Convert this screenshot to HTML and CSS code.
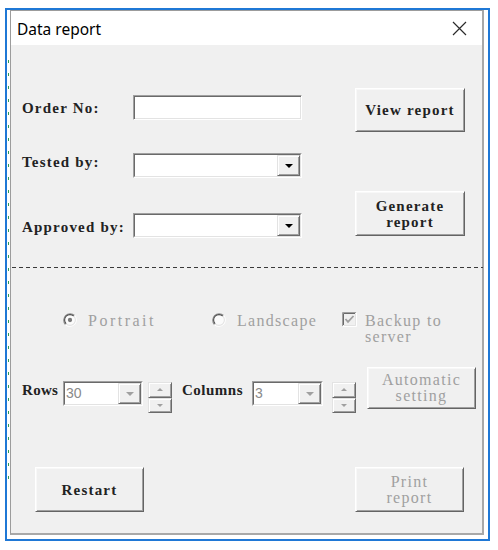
FILE: index.html
```html
<!DOCTYPE html>
<html>
<head>
<meta charset="utf-8">
<title>Data report</title>
<link rel="stylesheet" href="styles.css">
</head>
<body>
<div class="frame">
  <div class="win">
    <div class="titlebar">
      <span class="title">Data report</span>
      <svg class="close" width="15" height="15" viewBox="0 0 15 15"><path d="M1 1 L14 14 M14 1 L1 14" stroke="#2b2b2b" stroke-width="1.2" fill="none"/></svg>
    </div>
    <div class="panel">
      <div class="top">
        <div class="fields">
          <div class="row r1">
            <span class="lbl">Order No:</span>
            <div class="edit"></div>
          </div>
          <div class="row r2">
            <span class="lbl lbl-up">Tested by:</span>
            <div class="combo wide"><div class="combo-in"><div class="field"></div><div class="drop"><i class="tri"></i></div></div></div>
          </div>
          <div class="row r3">
            <span class="lbl lbl-down">Approved by:</span>
            <div class="combo wide"><div class="combo-in"><div class="field"></div><div class="drop"><i class="tri"></i></div></div></div>
          </div>
        </div>
        <div class="btncol">
          <button class="btn b-view">View report</button>
          <button class="btn b-gen">Generate<br>report</button>
        </div>
      </div>
      <div class="dash"></div>
      <div class="options">
        <div class="opt">
          <svg class="radio" width="14" height="14" viewBox="0 0 13 13">
            <circle cx="6.5" cy="6.5" r="5.5" fill="#fbfbfb"/>
            <path d="M2.26 10.74 A6 6 0 0 1 10.74 2.26" stroke="#8c8c8c" fill="none"/>
            <path d="M10.74 2.26 A6 6 0 0 1 2.26 10.74" stroke="#ffffff" fill="none"/>
            <path d="M2.96 10.04 A5 5 0 0 1 10.04 2.96" stroke="#4a4a4a" fill="none"/>
            <path d="M10.04 2.96 A5 5 0 0 1 2.96 10.04" stroke="#e3e3e3" fill="none"/>
            <circle cx="6.5" cy="6.5" r="2" fill="#7a7a7a"/>
          </svg>
          <span class="otext dis wide-sp">Portrait</span>
        </div>
        <div class="opt">
          <svg class="radio" width="14" height="14" viewBox="0 0 13 13">
            <circle cx="6.5" cy="6.5" r="5.5" fill="#fbfbfb"/>
            <path d="M2.26 10.74 A6 6 0 0 1 10.74 2.26" stroke="#8c8c8c" fill="none"/>
            <path d="M10.74 2.26 A6 6 0 0 1 2.26 10.74" stroke="#ffffff" fill="none"/>
            <path d="M2.96 10.04 A5 5 0 0 1 10.04 2.96" stroke="#4a4a4a" fill="none"/>
            <path d="M10.04 2.96 A5 5 0 0 1 2.96 10.04" stroke="#e3e3e3" fill="none"/>
          </svg>
          <span class="otext dis">Landscape</span>
        </div>
        <div class="opt">
          <svg class="check" width="15" height="15" viewBox="0 0 15 15">
            <rect x="0" y="0" width="15" height="15" fill="#f0f0f0"/>
            <path d="M0.5 14 V0.5 H14" stroke="#a0a0a0" fill="none"/>
            <path d="M1.5 13 V1.5 H13" stroke="#6a6a6a" fill="none"/>
            <path d="M1 14.5 H14.5 V1" stroke="#ffffff" fill="none"/>
            <path d="M2 13.5 H13.5 V2" stroke="#e3e3e3" fill="none"/>
            <path d="M3.5 7 L6 9.8 L11.5 4" stroke="#a0a0a0" stroke-width="1.8" fill="none"/>
          </svg>
          <span class="ctext dis">Backup to<br>server</span>
        </div>
      </div>
      <div class="setrow">
        <span class="lbl slbl l-rows">Rows</span>
        <div class="combo small c-rows"><div class="combo-in"><div class="field dtext">30</div><div class="drop"><i class="tri gray"></i></div></div></div>
        <div class="spin s-rows">
          <div class="spin-btn"><i class="utri"></i></div>
          <div class="spin-btn"><i class="dtri"></i></div>
        </div>
        <span class="lbl slbl l-cols">Columns</span>
        <div class="combo small c-cols"><div class="combo-in"><div class="field dtext">3</div><div class="drop"><i class="tri gray"></i></div></div></div>
        <div class="spin s-cols">
          <div class="spin-btn"><i class="utri"></i></div>
          <div class="spin-btn"><i class="dtri"></i></div>
        </div>
        <button class="btn dis b-auto">Automatic<br>setting</button>
      </div>
      <div class="bottom">
        <button class="btn b-restart">Restart</button>
        <button class="btn dis b-print">Print<br>report</button>
      </div>
    </div>
  </div>
</div>
</body>
</html>
```
FILE: styles.css
```css
* { box-sizing: border-box; }

body {
  margin: 0;
  background: #ffffff;
  font-family: "Liberation Serif", "Times New Roman", serif;
}

.frame {
  margin: 8px 0 0 5px;
  width: 485px;
  height: 533px;
  border: 2px solid #1f78d6;
  padding: 0 4px 4px 3px;
  background-color: #ffffff;
  background-image: repeating-linear-gradient(to bottom, #2f9a55 0 3px, transparent 3px 13px);
  background-repeat: no-repeat;
  background-position: 1px 50px;
  background-size: 1px 420px;
}

.win {
  height: 100%;
  border: 1px solid #9c9c9c;
  border-right: 2px solid #a8a8a8;
  border-bottom: 2px solid #a8a8a8;
  display: flex;
  flex-direction: column;
}

.titlebar {
  height: 34px;
  background: #ffffff;
  display: flex;
  align-items: center;
  justify-content: space-between;
  padding: 0 15px 0 6px;
}

.title {
  font-family: "Noto Sans", "Open Sans", sans-serif;
  font-size: 15.5px;
  color: #000;
  margin-top: 1px;
}

.close { display: block; margin-top: 1px; }

.panel {
  flex: 1;
  background: #f0f0f0;
  padding-left: 11px;
}

.lbl {
  font-size: 15px;
  font-weight: bold;
  letter-spacing: 1.2px;
  color: #222;
  line-height: 16px;
  white-space: nowrap;
}

.dis { color: #a0a0a0; font-weight: normal; letter-spacing: 1.3px; }
.dis.wide-sp { letter-spacing: 2.5px; }

/* top */
.top {
  display: flex;
  align-items: flex-start;
  padding-top: 43px;
}

.fields {
  margin-top: 7px;
  width: 280px;
  display: flex;
  flex-direction: column;
}

.row {
  display: flex;
  align-items: center;
  height: 25px;
}

.row .lbl { width: 111px; }
.r2 { margin-top: 33px; }
.r3 { margin-top: 35px; }
.lbl-up { margin-bottom: 8px; }
.lbl-down { margin-top: 3px; }

.edit {
  width: 169px;
  height: 25px;
  background: #fff;
  border: 1px solid;
  border-color: #a0a0a0 #ffffff #ffffff #a0a0a0;
  box-shadow: inset 1px 1px #6a6a6a, inset -1px -1px #e3e3e3;
}

.combo {
  height: 25px;
  border: 1px solid;
  border-color: #a0a0a0 #ffffff #ffffff #a0a0a0;
}
.combo.wide { width: 169px; }

.combo-in {
  height: 100%;
  display: flex;
  background: #fff;
  border: 1px solid;
  border-color: #6a6a6a #e3e3e3 #e3e3e3 #6a6a6a;
}

.field { flex: 1; }

.dtext {
  font-family: "Liberation Sans", Arial, sans-serif;
  font-size: 14px;
  color: #8a8a8a;
  line-height: 21px;
  padding-left: 1px;
}

.drop {
  width: 23px;
  display: flex;
  align-items: center;
  justify-content: center;
  background: #f0f0f0;
  border: 1px solid;
  border-color: #e3e3e3 #6a6a6a #6a6a6a #e3e3e3;
  box-shadow: inset 1px 1px #ffffff, inset -1px -1px #a0a0a0;
}

.tri {
  width: 0;
  height: 0;
  border-left: 4px solid transparent;
  border-right: 4px solid transparent;
  border-top: 4px solid #000;
}
.tri.gray { border-top-color: #a0a0a0; }

.btncol {
  margin-left: 53px;
  display: flex;
  flex-direction: column;
}

.btn {
  display: flex;
  align-items: center;
  justify-content: center;
  text-align: center;
  padding: 0;
  margin: 0;
  width: 110px;
  font-family: "Liberation Serif", "Times New Roman", serif;
  font-size: 15px;
  font-weight: bold;
  letter-spacing: 1.2px;
  line-height: 16px;
  color: #222;
  background: #f0f0f0;
  border: 1px solid;
  border-color: #ffffff #646464 #646464 #ffffff;
  box-shadow: inset 1px 1px #f8f8f8, inset -1px -1px #a0a0a0;
}
.btn.dis { color: #a0a0a0; font-weight: normal; letter-spacing: 1.3px; font-size: 16px; }

.b-view { height: 44px; }
.b-gen { height: 45px; margin-top: 59px; }

/* dash */
.dash {
  margin: 29px 0 0 -10px;
  height: 1px;
  width: 471px;
  background: repeating-linear-gradient(to right, #3a3a3a 0 4px, transparent 4px 7px);
}

/* options */
.options {
  margin: 44px 0 0 41px;
  display: grid;
  grid-template-columns: 149px 130px auto;
  align-items: start;
}

.opt { display: flex; align-items: flex-start; }
.radio { display: block; margin-top: 1px; flex: none; }
.check { display: block; flex: none; }

.otext, .ctext {
  font-size: 16px;
  line-height: 16px;
  margin-top: 1px;
  white-space: nowrap;
}
.otext { margin-left: 11px; }
.ctext { margin-left: 8px; }

/* settings row */
.setrow {
  margin-top: 22px;
  display: flex;
  align-items: flex-start;
}

.slbl { margin-top: 15px; }
.l-rows { width: 41px; letter-spacing: 0.3px; }
.l-cols { width: 70px; margin-left: 10px; letter-spacing: 0.5px; }

.combo.small { margin-top: 14px; }
.c-rows { width: 80px; }
.c-cols { width: 71px; }

.spin {
  margin-top: 15px;
  width: 24px;
  height: 31px;
  display: flex;
  flex-direction: column;
}
.s-rows { margin-left: 5px; }
.s-cols { margin-left: 9px; }

.spin-btn {
  flex: 1;
  display: flex;
  align-items: center;
  justify-content: center;
  background: #f0f0f0;
  border: 1px solid;
  border-color: #e3e3e3 #6a6a6a #6a6a6a #e3e3e3;
  box-shadow: inset 1px 1px #ffffff, inset -1px -1px #a0a0a0;
}

.utri, .dtri {
  width: 0;
  height: 0;
  border-left: 3.5px solid transparent;
  border-right: 3.5px solid transparent;
}
.utri { border-bottom: 3.5px solid #a0a0a0; }
.dtri { border-top: 3.5px solid #a0a0a0; }

.b-auto { margin-left: 11px; width: 109px; height: 42px; }

/* bottom */
.bottom {
  margin-top: 54px;
  display: flex;
}
.b-restart { margin-left: 13px; width: 109px; height: 45px; }
.b-print { margin-left: 211px; width: 109px; height: 45px; }
```
